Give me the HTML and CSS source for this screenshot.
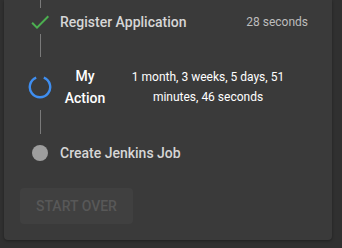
FILE: index.html
```html
<!DOCTYPE html>
<html>
<head>
<meta charset="utf-8">
<link rel="stylesheet" href="styles.css">
</head>
<body>
<div class="card">
  <div class="conn conn-top"></div>
  <div class="step step-done">
    <div class="icon">
      <svg width="24" height="24" viewBox="0 0 24 24"><path d="M9 16.17L4.83 12l-1.42 1.41L9 19 21 7l-1.41-1.41z" fill="#4caf50"/></svg>
    </div>
    <div class="label">Register Application</div>
    <div class="time">28 seconds</div>
  </div>
  <div class="conn conn-1"></div>
  <div class="step step-active">
    <div class="icon">
      <svg width="24" height="24" viewBox="0 0 24 24"><path d="M8.2 2.6 A10.2 10.2 0 1 0 15.8 2.6" fill="none" stroke="#3f8ef0" stroke-width="2.4"/></svg>
    </div>
    <div class="label label-center">My Action</div>
    <div class="time time-long">1 month, 3 weeks, 5 days, 51 minutes, 46 seconds</div>
  </div>
  <div class="conn conn-2"></div>
  <div class="step step-pending">
    <div class="icon"><span class="dot"></span></div>
    <div class="label">Create Jenkins Job</div>
  </div>
  <div class="actions">
    <button class="btn" disabled>Start over</button>
  </div>
</div>
</body>
</html>
```

FILE: styles.css
```css
html, body {
  margin: 0;
  padding: 0;
  background: #303030;
  font-family: Roboto, "Liberation Sans", sans-serif;
}
body {
  width: 342px;
  height: 248px;
  overflow: hidden;
}
.card {
  margin: 0 10px 0 4px;
  height: 240px;
  box-sizing: border-box;
  background: #3a3a3a;
  border-radius: 0 0 4px 4px;
  box-shadow: 0 1px 3px rgba(0,0,0,0.35);
  padding: 0 24px 16px 24px;
}
.conn {
  width: 1px;
  margin-left: 11.5px;
  background: #7a7a7a;
}
.conn-top { height: 8px; }
.conn-1 { height: 23px; }
.conn-2 { height: 24px; margin-top: 1px; }
.step {
  display: flex;
  align-items: center;
}
.step-done { height: 24px; margin-top: 2px; }
.step-active { height: 44px; margin-top: 8px; }
.step-pending { height: 24px; margin-top: 7px; }
.icon {
  width: 24px;
  height: 24px;
  flex: none;
  display: flex;
  align-items: center;
  justify-content: center;
}
.icon svg { display: block; }
.dot {
  width: 16px;
  height: 16px;
  border-radius: 50%;
  background: #9e9e9e;
}
.label {
  margin-left: 8px;
  font-size: 14px;
  font-weight: 500;
  color: #d6d6d6;
  white-space: nowrap;
}
.step-active .label { color: #fff; }
.label-center {
  width: 50px;
  white-space: normal;
  text-align: center;
  line-height: 22px;
}
.time {
  margin-left: auto;
  font-size: 12px;
  color: #bdbdbd;
}
.time-long {
  margin-left: 18px;
  width: 160px;
  text-align: center;
  line-height: 20px;
  color: #fff;
}
.actions {
  margin-top: 23px;
  margin-left: -8px;
}
.btn {
  height: 36px;
  padding: 0 16px;
  border: none;
  border-radius: 4px;
  background: #404040;
  color: #585858;
  font-family: Roboto, "Liberation Sans", sans-serif;
  font-size: 14px;
  font-weight: 500;
  text-transform: uppercase;
}
```
